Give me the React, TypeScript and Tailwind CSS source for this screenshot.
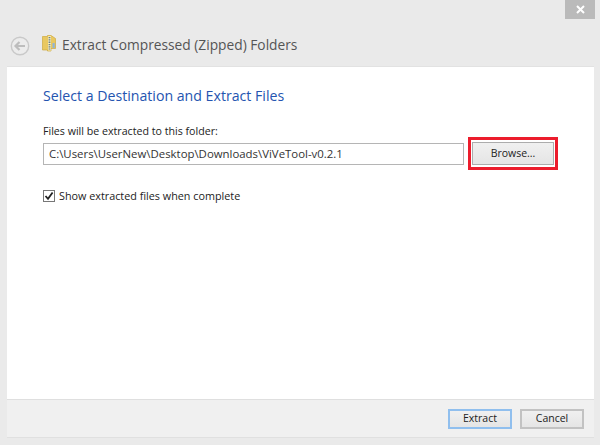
export default function App() {
  return (
    <div className="w-[600px] h-[445px] bg-[#eaeaea] flex flex-col overflow-hidden antialiased font-['Open_Sans',sans-serif]">
      <div className="h-[19px] flex justify-end pr-[5px] shrink-0">
        <div className="w-[30px] h-[19px] bg-[#bababa] flex items-center justify-center">
          <svg width="9" height="9" viewBox="0 0 9 9"><path d="M1 1L8 8M8 1L1 8" stroke="#fff" strokeWidth="2" /></svg>
        </div>
      </div>
      <div className="h-[47px] flex items-start pl-[10px] pt-[17px] shrink-0">
        <svg width="20" height="20" viewBox="0 0 20 20">
          <circle cx="10" cy="10" r="8.7" fill="#ececec" stroke="#c9c9c9" strokeWidth="1.4" />
          <path d="M15 10H6M9.5 6L5.5 10L9.5 14" fill="none" stroke="#bdbdbd" strokeWidth="2.2" />
        </svg>
        <svg className="ml-[12px] mt-[-1px]" width="14" height="17" viewBox="0 0 14 17">
          <path d="M0.5 1.5H5.5V0.5H9L13.5 3.5V13.5H9V16H5.5V15H0.5Z" fill="#e9c860" stroke="#cda93f" strokeWidth="0.7" />
          <rect x="6" y="1" width="3" height="14.5" fill="#f6eab0" />
          <path d="M7.5 2V14.5" stroke="#6d7f8c" strokeWidth="1.8" strokeDasharray="1.3 1" />
          <rect x="10.5" y="8" width="2.2" height="5" fill="#8fb4d8" />
        </svg>
        <span className="ml-[6px] mt-[-1px] text-[13.75px] leading-[20px] text-[#555] whitespace-nowrap">Extract Compressed (Zipped) Folders</span>
      </div>
      <div className="ml-[7px] w-[587px] h-[333px] bg-white border-t border-[#e2e2e2] flex flex-col pl-[36px] shrink-0">
        <h1 className="mt-[19px] text-[14.15px] leading-[20px] text-[#2454b0] whitespace-nowrap">Select a Destination and Extract Files</h1>
        <div className="mt-[18px] text-[10.65px] leading-[14px] text-[#222]">Files will be extracted to this folder:</div>
        <div className="flex items-center mt-[-1px]">
          <div className="w-[421px] h-[22px] border border-[#b5b5b5] bg-white pl-[5px] text-[11.4px] leading-[20px] text-[#333] whitespace-nowrap">C:\Users\UserNew\Desktop\Downloads\ViVeTool-v0.2.1</div>
          <div className="ml-[4px] w-[90px] h-[33px] border-[3px] border-[#ec1c2c] flex items-center justify-center">
            <button className="w-[82px] h-[23px] border border-[#acacac] bg-gradient-to-b from-[#f0f0f0] to-[#e5e5e5] text-[10.5px] text-[#222]">Browse...</button>
          </div>
        </div>
        <label className="flex items-center mt-[19px]">
          <span className="w-[12px] h-[12px] border border-[#777] bg-white flex items-center justify-center">
            <svg width="10" height="10" viewBox="0 0 10 10"><path d="M1.5 5L4 7.8L8.6 1.5" fill="none" stroke="#222" strokeWidth="1.8" /></svg>
          </span>
          <span className="ml-[4px] text-[10.8px] leading-[14px] text-[#222] whitespace-nowrap">Show extracted files when complete</span>
        </label>
      </div>
      <div className="ml-[7px] w-[587px] h-[39px] bg-[#f0f0f0] border-t border-[#dfdfdf] border-b border-b-[#e0e0e0] flex items-center justify-end pr-[10px] gap-[8px] shrink-0">
        <button className="w-[64px] h-[20px] border-2 border-[#90bfee] bg-gradient-to-b from-[#f0f0f0] to-[#e5e5e5] text-[10.5px] text-[#222]">Extract</button>
        <button className="w-[64px] h-[20px] border-2 border-[#c2c2c2] bg-gradient-to-b from-[#f0f0f0] to-[#e5e5e5] text-[10.5px] text-[#222]">Cancel</button>
      </div>
    </div>
  );
}
